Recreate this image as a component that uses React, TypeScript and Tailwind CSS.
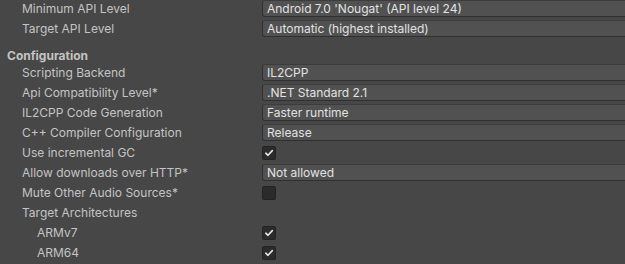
import React from 'react';

type Row =
  | { kind: 'field'; label: string; value: string; indent?: boolean }
  | { kind: 'check'; label: string; checked: boolean; indent?: boolean }
  | { kind: 'label'; label: string };

const topRows: Row[] = [
  { kind: 'field', label: 'Minimum API Level', value: "Android 7.0 'Nougat' (API level 24)" },
  { kind: 'field', label: 'Target API Level', value: 'Automatic (highest installed)' },
];

const configRows: Row[] = [
  { kind: 'field', label: 'Scripting Backend', value: 'IL2CPP' },
  { kind: 'field', label: 'Api Compatibility Level*', value: '.NET Standard 2.1' },
  { kind: 'field', label: 'IL2CPP Code Generation', value: 'Faster runtime' },
  { kind: 'field', label: 'C++ Compiler Configuration', value: 'Release' },
  { kind: 'check', label: 'Use incremental GC', checked: true },
  { kind: 'field', label: 'Allow downloads over HTTP*', value: 'Not allowed' },
  { kind: 'check', label: 'Mute Other Audio Sources*', checked: false },
  { kind: 'label', label: 'Target Architectures' },
  { kind: 'check', label: 'ARMv7', checked: true, indent: true },
  { kind: 'check', label: 'ARM64', checked: true, indent: true },
];

const CheckBox: React.FC<{ checked: boolean }> = ({ checked }) => (
  <div className="mt-[2px] w-[14px] h-[14px] rounded-[2px] bg-[#2b2b2b] border border-[#232323] flex items-center justify-center">
    {checked && (
      <svg width="10" height="10" viewBox="0 0 10 10">
        <path d="M1.8 5.2 L4 7.3 L8.3 2.6" fill="none" stroke="#e6e6e6" strokeWidth="1.6" strokeLinecap="round" strokeLinejoin="round" />
      </svg>
    )}
  </div>
);

const InspectorRow: React.FC<{ row: Row }> = ({ row }) => {
  const indent = 'indent' in row && row.indent;
  return (
    <div className="flex h-5 items-start">
      <div
        className={`w-[262px] shrink-0 h-[17px] flex items-center text-[#c4c4c4] ${indent ? 'pl-[37px]' : 'pl-[22px]'}`}
      >
        {row.label}
      </div>
      {row.kind === 'field' && (
        <div className="w-[400px] shrink-0 h-[17px] flex items-center px-[4px] rounded-[3px] bg-[#515151] border border-[#303030] border-t-[#3c3c3c] text-[#e2e2e2]">
          {row.value}
        </div>
      )}
      {row.kind === 'check' && <CheckBox checked={row.checked} />}
    </div>
  );
};

const App: React.FC = () => {
  return (
    <div
      className="w-[625px] h-[264px] overflow-hidden bg-[#474747] text-[12px] leading-none"
      style={{ fontFamily: 'Inter, "Noto Sans", sans-serif' }}
    >
      {topRows.map((r) => (
        <InspectorRow key={r.label} row={r} />
      ))}

      {/* section header */}
      <div className="h-6 pl-[7px] pt-[10px] font-bold text-[#c4c4c4]">Configuration</div>

      {configRows.map((r) => (
        <InspectorRow key={r.label} row={r} />
      ))}
    </div>
  );
};

export default App;
